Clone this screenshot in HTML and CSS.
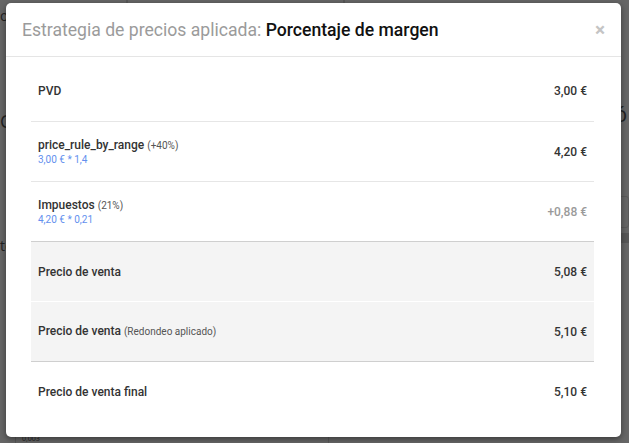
FILE: index.html
```html
<!DOCTYPE html>
<html lang="es">
<head>
<meta charset="utf-8">
<title>Estrategia de precios</title>
<link rel="stylesheet" href="styles.css">
</head>
<body>
<div class="backdrop">
  <span class="bg-line bg-v1"></span>
  <span class="bg-line bg-v2"></span>
  <span class="bg-line bg-v3"></span>
  <span class="bg-line bg-v4"></span>
  <span class="bg-text bg-t1">or</span>
  <span class="bg-text bg-t2">C</span>
  <span class="bg-text bg-t3">te</span>
  <span class="bg-text bg-t4">ó</span>
  <span class="bg-text bg-t5">0,003</span>
  <span class="bg-box"></span>
  <span class="bg-band"></span>
</div>
<div class="modal">
  <div class="modal-header">
    <h4 class="modal-title"><span class="muted">Estrategia de precios aplicada:</span> <strong>Porcentaje de margen</strong></h4>
    <span class="close">×</span>
  </div>
  <div class="modal-body">
    <div class="row">
      <div class="label">PVD</div>
      <div class="value">3,00 €</div>
    </div>
    <div class="row">
      <div class="label">
        <div>price_rule_by_range <span class="note">(+40%)</span></div>
        <div class="calc">3,00 € * 1,4</div>
      </div>
      <div class="value">4,20 €</div>
    </div>
    <div class="row">
      <div class="label">
        <div>Impuestos <span class="note">(21%)</span></div>
        <div class="calc">4,20 € * 0,21</div>
      </div>
      <div class="value value-muted">+0,88 €</div>
    </div>
    <div class="row row-shaded row-strong-top">
      <div class="label">Precio de venta</div>
      <div class="value">5,08 €</div>
    </div>
    <div class="row row-shaded row-white-top">
      <div class="label">Precio de venta <span class="note">(Redondeo aplicado)</span></div>
      <div class="value">5,10 €</div>
    </div>
    <div class="row row-strong-top">
      <div class="label">Precio de venta final</div>
      <div class="value">5,10 €</div>
    </div>
  </div>
</div>
</body>
</html>
```

FILE: styles.css
```css
* { box-sizing: border-box; }
html, body {
  margin: 0;
  padding: 0;
  width: 629px;
  height: 443px;
  overflow: hidden;
}
body {
  background: #666666;
  font-family: Roboto, "Liberation Sans", Arial, sans-serif;
  position: relative;
  padding: 3px 8px 6px 6px;
}
.backdrop {
  position: absolute;
  inset: 0;
  z-index: 0;
}
.bg-line {
  position: absolute;
  background: #585858;
}
.bg-v1 { left: 126px; top: 0; width: 2px; height: 6px; }
.bg-v2 { left: 343px; top: 0; width: 2px; height: 6px; }
.bg-v3 { left: 15px; bottom: 0; width: 1px; height: 8px; }
.bg-v4 { left: 328px; bottom: 0; width: 1px; height: 8px; }
.bg-text {
  position: absolute;
  color: #222;
  font-family: "Open Sans", sans-serif;
  font-size: 14px;
  line-height: 16px;
}
.bg-t1 { left: 0; top: 8px; }
.bg-t2 { left: 0; top: 111px; font-size: 18px; line-height: 20px; }
.bg-t3 { left: 0; top: 238px; }
.bg-t4 { left: 614px; top: 100px; font-size: 22px; line-height: 26px; }
.bg-t5 { left: 22px; top: 435px; font-size: 7px; line-height: 8px; }
.bg-box {
  position: absolute;
  left: 614px;
  top: 196px;
  width: 15px;
  height: 32px;
  border: 1px solid #5a5a5a;
  border-radius: 3px;
}
.bg-band {
  position: absolute;
  left: 614px;
  top: 233px;
  width: 15px;
  height: 10px;
  background: #575757;
}
.modal {
  position: relative;
  z-index: 1;
  width: 615px;
  height: 434px;
  background: #fff;
  border-radius: 5px;
  box-shadow: 0 2px 6px rgba(0, 0, 0, 0.45);
  display: flex;
  flex-direction: column;
}
.modal-header {
  height: 54px;
  border-bottom: 1px solid #e5e5e5;
  display: flex;
  align-items: center;
  justify-content: space-between;
  padding: 0 16px;
}
.modal-title {
  margin: 0;
  font-size: 17.6px;
  font-weight: 400;
  color: #111;
  line-height: 20px;
}
.modal-title .muted { color: #9b9b9b; }
.modal-title strong { font-weight: 500; color: #111; }
.close {
  color: #c4c4c4;
  font-size: 19px;
  font-weight: 700;
  line-height: 1;
}
.modal-body {
  padding: 4px 27px 16px 25px;
}
.row {
  height: 60px;
  display: flex;
  align-items: center;
  justify-content: space-between;
  padding: 0 7px;
  border-top: 1px solid #e6e6e6;
  font-size: 12px;
  color: #333;
}
.row:first-child { border-top: 0; }
.row-shaded { background: #f4f4f4; }
.row-strong-top { border-top: 1px solid #cfcfcf; }
.row-white-top { border-top: 1px solid #ffffff; }
.label {
  font-weight: 500;
  line-height: 14px;
}
.note {
  font-size: 10px;
  font-weight: 400;
  color: #555;
}
.calc {
  font-size: 10px;
  font-weight: 400;
  color: #6390ee;
  line-height: 13px;
}
.value {
  font-weight: 500;
  color: #333;
}
.value-muted { color: #9a9a9a; }
```
